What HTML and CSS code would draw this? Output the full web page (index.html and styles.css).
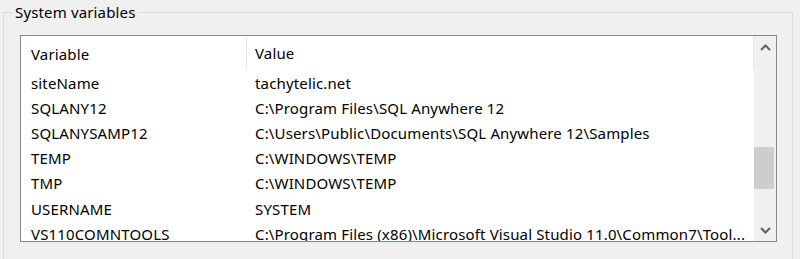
FILE: index.html
```html
<!DOCTYPE html>
<html lang="en">
<head>
    <meta charset="UTF-8">
    <title>System variables</title>
    <link rel="stylesheet" href="styles.css">
</head>
<body>

    <fieldset class="var-group">
        <legend>System variables</legend>

        <div class="var-list">
            <div class="var-table">
                <div class="var-head">
                    <div class="col-name">Variable</div>
                    <div class="col-value">Value</div>
                </div>
                <div class="var-row"><div class="col-name">siteName</div><div class="col-value">tachytelic.net</div></div>
                <div class="var-row"><div class="col-name">SQLANY12</div><div class="col-value">C:\Program Files\SQL Anywhere 12</div></div>
                <div class="var-row"><div class="col-name">SQLANYSAMP12</div><div class="col-value">C:\Users\Public\Documents\SQL Anywhere 12\Samples</div></div>
                <div class="var-row"><div class="col-name">TEMP</div><div class="col-value">C:\WINDOWS\TEMP</div></div>
                <div class="var-row"><div class="col-name">TMP</div><div class="col-value">C:\WINDOWS\TEMP</div></div>
                <div class="var-row"><div class="col-name">USERNAME</div><div class="col-value">SYSTEM</div></div>
                <div class="var-row"><div class="col-name">VS110COMNTOOLS</div><div class="col-value">C:\Program Files (x86)\Microsoft Visual Studio 11.0\Common7\Tool...</div></div>
            </div>

            <div class="scrollbar">
                <div class="arrow">
                    <svg width="11" height="7" viewBox="0 0 11 7"><path d="M1 6 L5.5 1.5 L10 6" fill="none" stroke="#606060" stroke-width="2"/></svg>
                </div>
                <div class="track">
                    <div class="thumb"></div>
                </div>
                <div class="arrow">
                    <svg width="11" height="7" viewBox="0 0 11 7"><path d="M1 1 L5.5 5.5 L10 1" fill="none" stroke="#606060" stroke-width="2"/></svg>
                </div>
            </div>
        </div>
    </fieldset>

</body>
</html>
```

FILE: styles.css
```css
body {
    font-family: 'Noto Sans', 'Open Sans', sans-serif;
    font-size: 15px;
    letter-spacing: 0.15px;
    background-color: #f0f0f0;
    color: #000;
    margin: 0;
    padding: 0;
    height: 259px;
    overflow: hidden;
}

.var-group {
    margin: 2px 7px 0 3px;
    padding: 13px 15px 40px 16px;
    border: 1px solid #dcdcdc;
}

.var-group legend {
    margin-left: -7px;
    padding: 0 2px;
    line-height: 20px;
    color: #000;
}

.var-list {
    display: flex;
    height: 205px;
    border: 1px solid #828790;
    background-color: #fff;
    overflow: hidden;
}

.var-table {
    flex: 1;
    overflow: hidden;
}

.var-head, .var-row {
    display: flex;
    white-space: nowrap;
}

.var-head {
    height: 34px;
    align-items: center;
    border-right: 1px solid #e5e5e5;
}

.var-row {
    height: 25.2px;
    align-items: center;
}

.col-name {
    width: 215px;
    padding-left: 10px;
    flex-shrink: 0;
}

.var-head .col-name {
    align-self: stretch;
    display: flex;
    align-items: center;
    border-right: 1px solid #e5e5e5;
    margin: 2px 0 0;
}

.col-value {
    padding-left: 9px;
}

.var-head .col-value {
    padding-left: 8px;
}

.scrollbar {
    width: 22px;
    display: flex;
    flex-direction: column;
    background-color: #f0f0f0;
}

.arrow {
    height: 22px;
    display: flex;
    align-items: center;
    justify-content: center;
}

.track {
    flex: 1;
    padding-top: 89px;
}

.thumb {
    width: 20px;
    height: 42px;
    background-color: #cdcdcd;
}
```
